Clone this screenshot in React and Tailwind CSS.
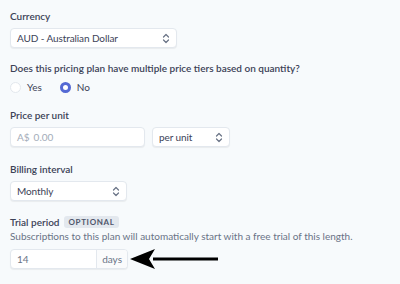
const font = { fontFamily: 'Lato, "Noto Sans", sans-serif' };

function Caret() {
  return (
    <svg width="8" height="11" viewBox="0 0 8 11" className="text-[#697386]">
      <path d="M1.5 4 L4 1.5 L6.5 4 M1.5 7 L4 9.5 L6.5 7" fill="none" stroke="currentColor" strokeWidth="1.2" strokeLinecap="round" strokeLinejoin="round" />
    </svg>
  );
}

function Select({ value, className }) {
  return (
    <div className={`flex h-[20px] items-center justify-between rounded-[4px] border border-[#e3e8ee] bg-white px-[6px] text-[10px] tracking-[-0.01em] text-[#3c4257] shadow-[0_1px_1px_rgba(0,0,0,0.06)] ${className}`}>
      <span>{value}</span>
      <Caret />
    </div>
  );
}

function Label({ children }) {
  return <div className="text-[10px] font-semibold leading-[14px] text-[#3c4257]">{children}</div>;
}

export default function App() {
  return (
    <div style={font} className="h-[284px] w-[400px] bg-[#f7fafc] px-[10px] pt-[9px]">
      <Label>Currency</Label>
      <Select value="AUD - Australian Dollar" className="mt-[5px] w-[167px]" />

      <div className="mt-[13px]">
        <Label>Does this pricing plan have multiple price tiers based on quantity?</Label>
      </div>
      <div className="mt-[5px] flex items-center gap-[18px] text-[10px] text-[#3c4257]">
        <label className="flex items-center gap-[6px]">
          <span className="h-[11px] w-[11px] rounded-full border border-[#e3e8ee] bg-white"></span>
          Yes
        </label>
        <label className="flex items-center gap-[6px]">
          <span className="h-[11px] w-[11px] rounded-full border-[3px] border-[#5469d4] bg-white"></span>
          No
        </label>
      </div>

      <div className="mt-[13px]">
        <Label>Price per unit</Label>
      </div>
      <div className="mt-[5px] flex gap-[7px]">
        <div className="flex h-[20px] w-[135px] items-center rounded-[4px] border border-[#e3e8ee] bg-white px-[6px] text-[10px] text-[#a3acb9] shadow-[0_1px_1px_rgba(0,0,0,0.06)]">
          <span>A$</span>
          <span className="ml-[4px]">0.00</span>
        </div>
        <Select value="per unit" className="w-[78px]" />
      </div>

      <div className="mt-[15px]">
        <Label>Billing interval</Label>
      </div>
      <Select value="Monthly" className="mt-[5px] w-[117px]" />

      <div className="mt-[14px] flex items-center gap-[5px]">
        <Label>Trial period</Label>
        <span className="rounded-[3px] bg-[#e3e8ee] px-[4px] text-[8px] font-bold leading-[12px] tracking-[0.08em] text-[#4f566b]">OPTIONAL</span>
      </div>
      <div className="text-[10px] leading-[15px] text-[#697386]">
        Subscriptions to this plan will automatically start with a free trial of this length.
      </div>
      <div className="mt-[4px] flex items-center">
        <div className="flex h-[20px] w-[118px] overflow-hidden rounded-[4px] border border-[#e3e8ee] bg-white text-[10px] shadow-[0_1px_1px_rgba(0,0,0,0.06)]">
          <div className="flex flex-1 items-center px-[6px] text-[#697386]">14</div>
          <div className="flex items-center border-l border-[#e3e8ee] bg-[#fafbfc] px-[5px] text-[#697386]">days</div>
        </div>
        <svg width="92" height="22" viewBox="0 0 92 22" className="ml-[1px]">
          <path d="M24 11 H89" stroke="black" strokeWidth="3" />
          <path d="M1 11 L26 1 L20 11 L26 21 Z" fill="black" />
        </svg>
      </div>
    </div>
  );
}
